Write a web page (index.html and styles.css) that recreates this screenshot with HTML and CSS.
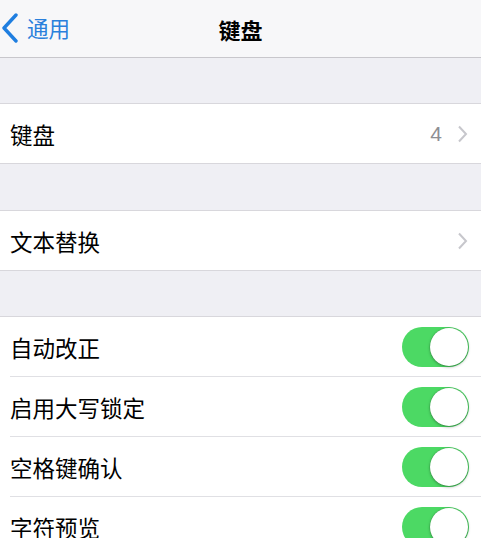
FILE: index.html
```html
<!DOCTYPE html>
<html lang="zh-CN">
<head>
<meta charset="utf-8">
<title>键盘</title>
<link rel="stylesheet" href="styles.css">
</head>
<body>
<header class="nav">
  <div class="back">
    <svg class="back-chev" width="18" height="30" viewBox="0 0 18 30"><path d="M15 2 L3 15 L15 28" fill="none" stroke="#1f7ee0" stroke-width="3.4" stroke-linecap="round" stroke-linejoin="round"/></svg>
    <span class="back-text">通用</span>
  </div>
  <div class="title">键盘</div>
</header>

<div class="spacer s1"></div>
<section class="group">
  <div class="row">
    <span class="label">键盘</span>
    <span class="detail">4</span>
    <svg class="chev" width="11" height="18" viewBox="0 0 11 18"><path d="M2 1.5 L9 9 L2 16.5" fill="none" stroke="#c7c7cc" stroke-width="2"/></svg>
  </div>
</section>

<div class="spacer"></div>
<section class="group">
  <div class="row">
    <span class="label">文本替换</span>
    <svg class="chev" width="11" height="18" viewBox="0 0 11 18"><path d="M2 1.5 L9 9 L2 16.5" fill="none" stroke="#c7c7cc" stroke-width="2"/></svg>
  </div>
</section>

<div class="spacer s3"></div>
<section class="group">
  <div class="row sep">
    <span class="label">自动改正</span>
    <span class="toggle"><span class="knob"></span></span>
  </div>
  <div class="row sep">
    <span class="label">启用大写锁定</span>
    <span class="toggle"><span class="knob"></span></span>
  </div>
  <div class="row sep">
    <span class="label">空格键确认</span>
    <span class="toggle"><span class="knob"></span></span>
  </div>
  <div class="row sep">
    <span class="label">字符预览</span>
    <span class="toggle"><span class="knob"></span></span>
  </div>
</section>
</body>
</html>
```
FILE: styles.css
```css
html, body {
  margin: 0;
  padding: 0;
}
body {
  background: #efeff4;
  font-family: "Noto Sans CJK SC", "Noto Sans", sans-serif;
  color: #000;
  width: 481px;
  height: 538px;
  overflow: hidden;
}
.nav {
  height: 57px;
  background: #f7f7f9;
  border-bottom: 1px solid #c8c7cc;
  display: flex;
  align-items: center;
  position: relative;
}
.back {
  display: flex;
  align-items: center;
  padding-left: 1px;
  gap: 8px;
  margin-top: -1px;
}
.back-chev {
  display: block;
}
.back-text {
  color: #2a80dc;
  font-size: 21.5px;
  line-height: 1;
}
.title {
  position: absolute;
  left: 0;
  right: 0;
  top: 0;
  height: 57px;
  display: flex;
  align-items: center;
  justify-content: center;
  font-size: 22px;
  font-weight: 700;
  pointer-events: none;
}
.spacer {
  height: 46px;
}
.s1 {
  height: 45px;
}
.s3 {
  height: 45px;
}
.group {
  background: #fff;
  border-top: 1px solid #d8d7dc;
  border-bottom: 1px solid #d8d7dc;
}
.row {
  height: 59px;
  display: flex;
  align-items: center;
  padding-left: 10px;
  padding-right: 12px;
  position: relative;
}
.row.sep {
  border-bottom: 1px solid #e0e0e4;
  margin-left: 10px;
  padding-left: 0;
}
.label {
  flex: 1;
  font-size: 22.5px;
  line-height: 1;
  margin-top: 1px;
}
.detail {
  color: #8e8e93;
  font-family: "Liberation Sans", Arial, sans-serif;
  font-size: 21px;
  margin-right: 15px;
}
.chev {
  display: block;
  margin-right: 1px;
}
.toggle {
  width: 67px;
  height: 40px;
  border-radius: 20px;
  background: #4cd964;
  position: relative;
  flex: none;
}
.knob {
  position: absolute;
  right: 1px;
  top: 1px;
  width: 38px;
  height: 38px;
  border-radius: 50%;
  background: #fff;
  box-shadow: 0 1px 3px rgba(0, 0, 0, 0.35), 0 0 0 0.5px rgba(0, 0, 0, 0.12);
}
```
